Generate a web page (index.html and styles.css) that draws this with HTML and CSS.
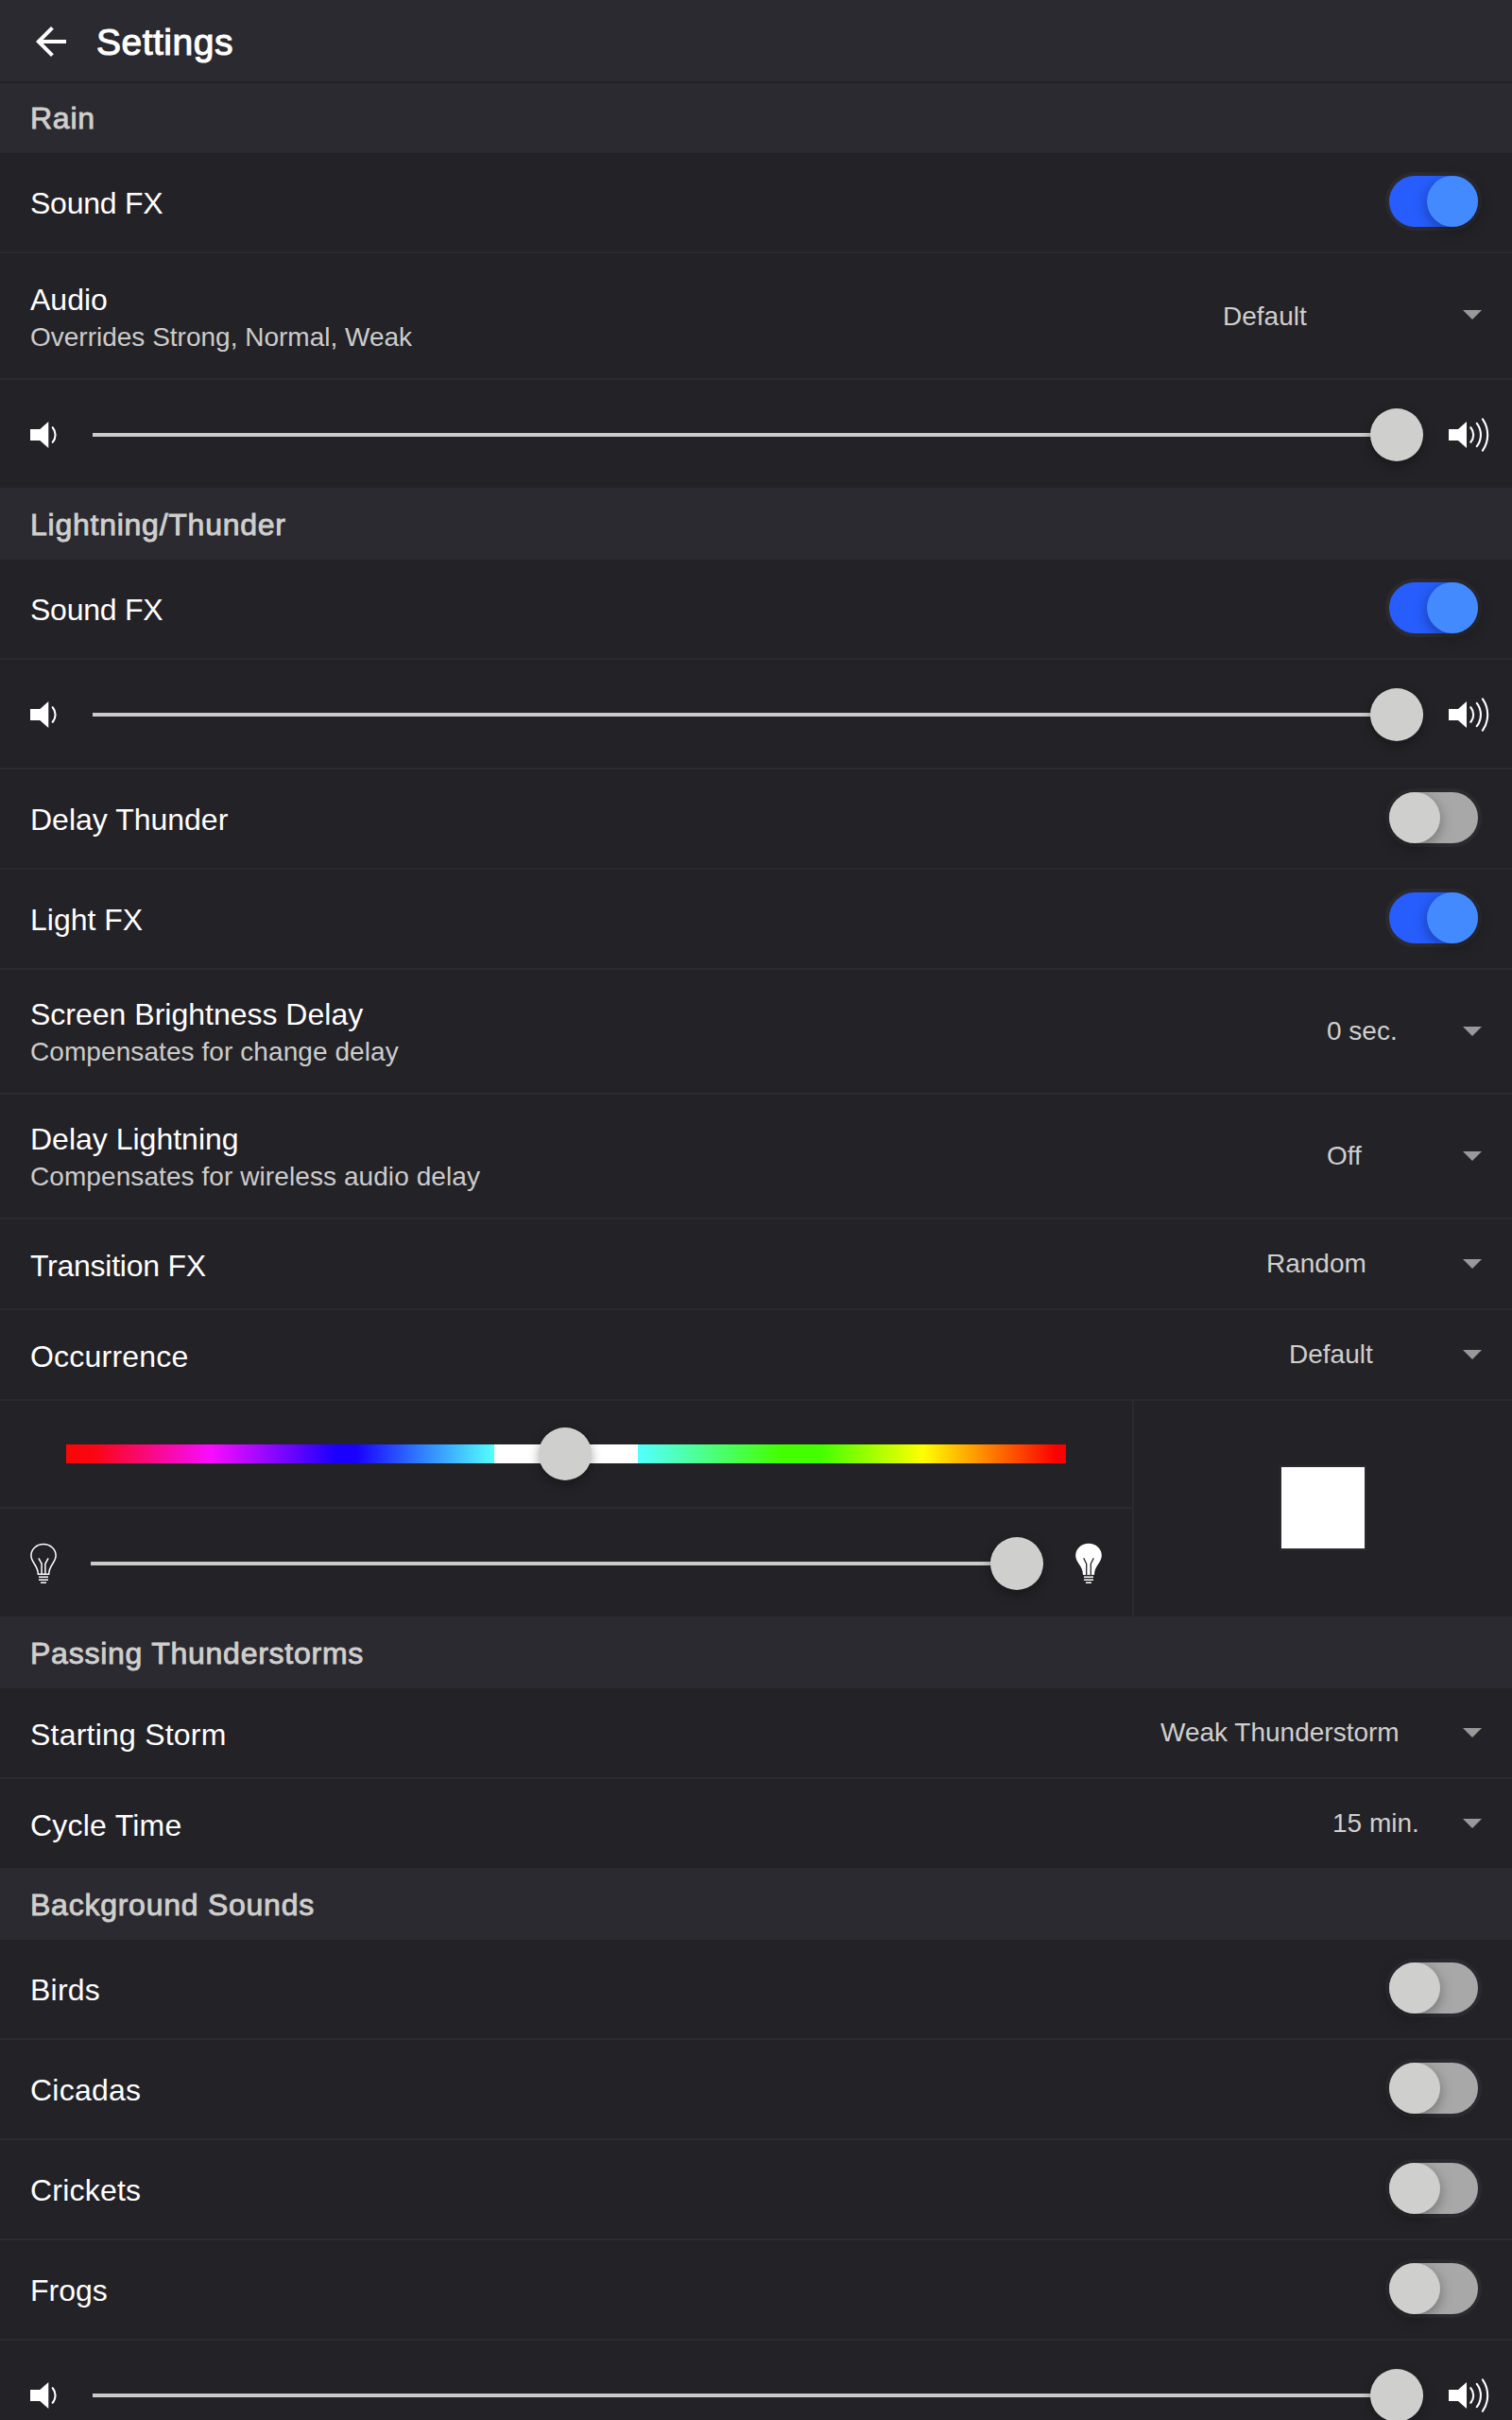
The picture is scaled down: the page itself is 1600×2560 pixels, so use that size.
FILE: index.html
```html
<!DOCTYPE html>
<html lang="en">
  <head>
    <meta charset="UTF-8" />
    <meta name="viewport" content="width=device-width, initial-scale=1.0" />
    <title>Settings</title>
    <link rel="stylesheet" href="styles.css">
  </head>
  <body>
    <!-- shared icons -->
    <svg class="sprite" width="0" height="0">
      <symbol id="vol-low" viewBox="0 0 28 40">
        <path fill="#fff" d="M0 14h10.3L19.3 6v28l-9-8H0z" />
        <path fill="none" stroke="#fff" stroke-width="2.1" stroke-linecap="round" d="M23.7 12.2A12 12 0 0 1 23.7 27.8" />
      </symbol>
      <symbol id="vol-high" viewBox="0 0 43 40">
        <path fill="#fff" d="M0 14h10L19 6v28l-9-8H0z" />
        <g fill="none" stroke="#fff" stroke-width="2.1" stroke-linecap="round">
          <path d="M23.3 12.2A12 12 0 0 1 23.3 27.8" />
          <path d="M29.8 7.8A20 20 0 0 1 29.8 32.2" />
          <path d="M35.9 3.3A29 29 0 0 1 35.9 36.7" />
        </g>
      </symbol>
    </svg>

    <header class="header">
      <svg class="back" viewBox="0 0 24 24">
        <path fill="#fff" d="M20 11H7.83l5.59-5.59L12 4l-8 8 8 8 1.41-1.41L7.83 13H20v-2z" />
      </svg>
      <h1>Settings</h1>
    </header>

    <h2>Rain</h2>
    <div class="row row-switch">
      <span class="label tight">Sound FX</span>
      <span class="switch on"></span>
    </div>
    <div class="row row-double first">
      <div class="text">
        <div class="label">Audio</div>
        <div class="sub">Overrides Strong, Normal, Weak</div>
      </div>
      <div class="select w-audio">Default</div>
    </div>
    <div class="row row-slider">
      <svg class="icon-low"><use href="#vol-low" /></svg>
      <div class="track"><span class="knob"></span></div>
      <svg class="icon-high"><use href="#vol-high" /></svg>
    </div>

    <h2>Lightning/Thunder</h2>
    <div class="row row-switch">
      <span class="label tight">Sound FX</span>
      <span class="switch on"></span>
    </div>
    <div class="row row-slider">
      <svg class="icon-low"><use href="#vol-low" /></svg>
      <div class="track"><span class="knob"></span></div>
      <svg class="icon-high"><use href="#vol-high" /></svg>
    </div>
    <div class="row row-switch">
      <span class="label">Delay Thunder</span>
      <span class="switch"></span>
    </div>
    <div class="row row-switch">
      <span class="label">Light FX</span>
      <span class="switch on"></span>
    </div>
    <div class="row row-double">
      <div class="text">
        <div class="label">Screen Brightness Delay</div>
        <div class="sub loose">Compensates for change delay</div>
      </div>
      <div class="select w-delay">0 sec.</div>
    </div>
    <div class="row row-double">
      <div class="text">
        <div class="label">Delay Lightning</div>
        <div class="sub loose">Compensates for wireless audio delay</div>
      </div>
      <div class="select w-delay">Off</div>
    </div>
    <div class="row row-select">
      <span class="label tight">Transition FX</span>
      <div class="select w-transition">Random</div>
    </div>
    <div class="row row-select">
      <span class="label loose">Occurrence</span>
      <div class="select w-occurrence">Default</div>
    </div>
    <div class="color-panel">
      <div class="color-sliders">
        <div class="row row-hue">
          <div class="hue"><span class="knob"></span></div>
        </div>
        <div class="row row-slider row-bulb">
          <svg class="bulb" viewBox="0 0 28 44">
            <g fill="none" stroke="#fff" stroke-width="1.5">
              <path d="M8.3 33.2C8.3 24 .9 21 .9 13.6a13.1 12.2 0 0 1 26.2 0C27.1 21 19.7 24 19.7 33.2z" />
              <path d="M8.9 16.3l3.2 6v11M19.1 16.3l-3.2 6v11M9 36.3h10M9 39.3h10M11 42.3h6" />
            </g>
          </svg>
          <div class="track"><span class="knob"></span></div>
          <svg class="bulb" viewBox="0 0 28 44">
            <path fill="#fff" d="M8 34C8 24.5.2 21 .2 13.6a13.8 12.9 0 0 1 27.6 0C27.8 21 20 24.5 20 34z" />
            <path fill="none" stroke="#232227" stroke-width="1.3" d="M8.7 16.3l3 6V34M19.3 16.3l-3 6V34" />
            <path fill="none" stroke="#fff" stroke-width="1.5" d="M9 36.3h10M9 39.3h10M11 42.3h6" />
          </svg>
        </div>
      </div>
      <div class="color-preview">
        <div class="swatch"></div>
      </div>
    </div>

    <h2>Passing Thunderstorms</h2>
    <div class="row row-select">
      <span class="label loose">Starting Storm</span>
      <div class="select w-storm">Weak Thunderstorm</div>
    </div>
    <div class="row row-select">
      <span class="label loose">Cycle Time</span>
      <div class="select w-cycle">15 min.</div>
    </div>

    <h2>Background Sounds</h2>
    <div class="row row-switch">
      <span class="label loose">Birds</span>
      <span class="switch"></span>
    </div>
    <div class="row row-switch">
      <span class="label loose">Cicadas</span>
      <span class="switch"></span>
    </div>
    <div class="row row-switch">
      <span class="label loose">Crickets</span>
      <span class="switch"></span>
    </div>
    <div class="row row-switch">
      <span class="label">Frogs</span>
      <span class="switch"></span>
    </div>
    <div class="row row-slider">
      <svg class="icon-low"><use href="#vol-low" /></svg>
      <div class="track"><span class="knob"></span></div>
      <svg class="icon-high"><use href="#vol-high" /></svg>
    </div>
  </body>
</html>
```

FILE: styles.css
```css
* {
  box-sizing: border-box;
}
body {
  margin: 0;
  height: 100vh;
  overflow: hidden;
  background: #232227;
  color: #fff;
  font-family: "Helvetica Neue", "Liberation Sans", Arial, sans-serif;
  font-size: 32px;
  line-height: 36px;
}
.sprite {
  display: block;
}
svg {
  flex-shrink: 0;
}

/* header */
.header {
  display: flex;
  align-items: center;
  gap: 24px;
  height: 88px;
  padding-left: 30px;
  background: #2b2a30;
  border-bottom: 2px solid #232227;
}
.back {
  width: 48px;
  height: 48px;
  margin-top: 2px;
}
h1 {
  margin: 0;
  padding-top: 4px;
  font-size: 39px;
  line-height: 44px;
  font-weight: 400;
  letter-spacing: 0.5px;
  -webkit-text-stroke: 1.1px #fff;
}
h2 {
  height: 74px;
  margin: 0;
  padding: 19px 32px;
  background: #2b2a30;
  color: #cfcfcd;
  font-size: 32px;
  line-height: 36px;
  font-weight: 400;
  letter-spacing: 0.75px;
  -webkit-text-stroke: 0.9px #cfcfcd;
}

/* rows */
.row {
  display: flex;
  align-items: center;
  justify-content: space-between;
  padding: 0 32px;
  border-bottom: 2px solid #2b2a30;
}
.row-switch {
  height: 106px;
}
.row-switch .label {
  padding-top: 2px;
}
.row-select {
  height: 96px;
}
.row-select .label {
  padding-top: 4px;
}
.row-double {
  height: 132px;
}
.row-double .text {
  padding-top: 2px;
}
.row-double.first {
  height: 134px;
}
.row-double.first .text {
  padding-top: 4px;
}
.sub {
  margin-top: 6px;
  color: #cccccb;
  font-size: 28px;
  line-height: 32px;
}
.label.tight {
  letter-spacing: -0.25px;
}
.label.loose {
  letter-spacing: 0.22px;
}
.sub.loose {
  letter-spacing: 0.08px;
}

/* switch */
.switch {
  width: 102px;
  height: 62px;
  margin-bottom: 2px;
  border: 4px solid #2b2a30;
  border-radius: 31px;
  background: #a8a8a8;
}
.switch::after {
  content: "";
  display: block;
  width: 54px;
  height: 54px;
  border-radius: 50%;
  background: #cfcfcd;
  box-shadow: 0 4px 14px rgba(0, 0, 0, 0.35);
}
.switch.on {
  background: #265dfc;
}
.switch.on::after {
  margin-left: 40px;
  background: #448aff;
}

/* select */
.select {
  display: flex;
  align-items: center;
  justify-content: space-between;
  color: #cfcfcd;
  font-size: 28px;
  line-height: 32px;
}
.select::after {
  content: "";
  border: 10px solid transparent;
  border-top-color: #999;
  border-bottom: 0;
}
.first .select {
  padding-top: 2px;
}
.first .select::after {
  margin-bottom: 4px;
}
.w-audio {
  width: 274px;
}
.w-delay {
  width: 164px;
}
.w-transition {
  width: 228px;
}
.w-occurrence {
  width: 204px;
}
.w-storm {
  width: 340px;
}
.w-cycle {
  width: 158px;
}

/* sliders */
.row-slider {
  height: 116px;
  padding: 2px 24px 0 32px;
}
.icon-low {
  width: 28px;
  height: 40px;
}
.icon-high {
  width: 43px;
  height: 40px;
}
.track {
  flex: 1;
  display: flex;
  align-items: center;
  justify-content: flex-end;
  height: 4px;
  margin: 0 27px 0 38px;
  background: #cbcbcb;
}
.knob {
  flex-shrink: 0;
  width: 56px;
  height: 56px;
  border-radius: 50%;
  background: #cfcfcd;
  box-shadow: 0 4px 12px rgba(0, 0, 0, 0.35);
}

/* lightning color */
.color-panel {
  display: flex;
}
.color-sliders {
  width: 1200px;
  border-right: 2px solid #2b2a30;
}
.row-hue {
  height: 114px;
  padding: 0 70px;
}
.hue {
  flex: 1;
  display: flex;
  align-items: center;
  justify-content: center;
  height: 20px;
  padding-right: 2px;
  background: linear-gradient(
    to right,
    #f90606 0%,
    #fa0615 3%,
    #f80dff 14.5%,
    #1a00ff 27%,
    #1a00ff 29%,
    #3080ff 35.6%,
    #54ffff 42.8%,
    #fff 42.8%,
    #fff 57.2%,
    #54ffff 57.2%,
    #44ff00 71.5%,
    #44ff00 75.5%,
    #ffff00 85.7%,
    #fb0000 99%
  );
}
.row-bulb {
  padding-right: 32px;
}
.row-bulb .track {
  margin: 0 34px 0 36px;
}
.bulb {
  width: 28px;
  height: 44px;
}
.color-preview {
  flex: 1;
  display: flex;
  align-items: center;
  justify-content: center;
  border-bottom: 2px solid #2b2a30;
}
.swatch {
  width: 92px;
  height: 90px;
  margin-bottom: 2px;
  border: 2px solid #2b2a30;
  background: #fff;
}
```
